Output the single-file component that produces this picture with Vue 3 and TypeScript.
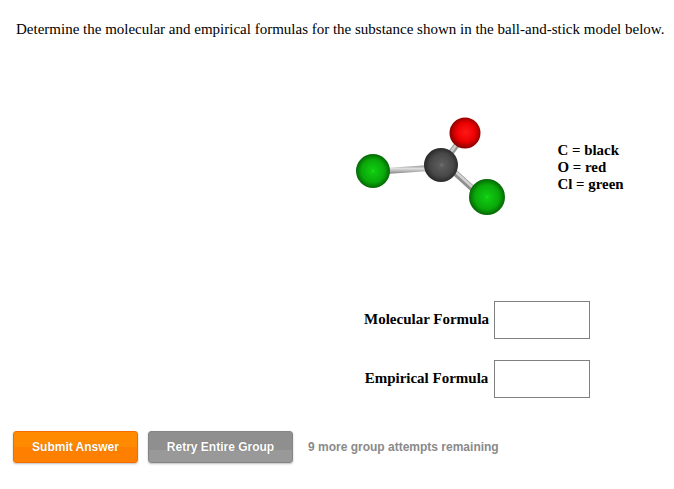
<script setup lang="ts">
const legend: string[] = ['C = black', 'O = red', 'Cl = green']
const fields: string[] = ['Molecular Formula', 'Empirical Formula']
</script>

<template>
  <main class="page">
    <p class="question">Determine the molecular and empirical formulas for the substance shown in the ball-and-stick model below.</p>
    <section class="figure">
      <svg class="model" width="170" height="110" viewBox="0 0 170 110" role="img" aria-label="Ball-and-stick model">
        <defs>
          <radialGradient id="g" cx="50%" cy="50%" r="52%">
            <stop offset="0" stop-color="#1ae01a" />
            <stop offset=".12" stop-color="#10c810" />
            <stop offset=".65" stop-color="#0aa80a" />
            <stop offset="1" stop-color="#045e04" />
          </radialGradient>
          <radialGradient id="r" cx="52%" cy="48%" r="52%">
            <stop offset="0" stop-color="#ff1818" />
            <stop offset=".6" stop-color="#ea0000" />
            <stop offset="1" stop-color="#860000" />
          </radialGradient>
          <radialGradient id="c" cx="52%" cy="50%" r="52%">
            <stop offset="0" stop-color="#787878" />
            <stop offset=".12" stop-color="#5c5c5c" />
            <stop offset=".65" stop-color="#484848" />
            <stop offset="1" stop-color="#262626" />
          </radialGradient>
          <linearGradient id="b1" x1="0" y1="0" x2="0" y2="1">
            <stop offset="0" stop-color="#8c8c8c" />
            <stop offset=".4" stop-color="#e0e0e0" />
            <stop offset="1" stop-color="#808080" />
          </linearGradient>
        </defs>
        <path d="M46 60 L90 57 L90 63 L46 66 Z" fill="url(#b1)" />
        <path d="M110 46 L122 30" stroke="#9a9a9a" stroke-width="6" fill="none" />
        <path d="M110 45 L122 29" stroke="#cfcfcf" stroke-width="2.5" fill="none" />
        <path d="M112 62 L134 82" stroke="#8f8f8f" stroke-width="6" fill="none" />
        <path d="M112.5 61 L134.5 81" stroke="#d2d2d2" stroke-width="2.5" fill="none" />
        <circle cx="125" cy="25" r="15.5" fill="url(#r)" />
        <circle cx="101" cy="57" r="17" fill="url(#c)" />
        <circle cx="33" cy="63" r="17" fill="url(#g)" />
        <circle cx="147" cy="89" r="18" fill="url(#g)" />
      </svg>
      <ul class="legend">
        <li v-for="item in legend" :key="item">{{ item }}</li>
      </ul>
    </section>
    <section class="fields">
      <label v-for="f in fields" :key="f" class="field">
        <span class="name">{{ f }}</span>
        <input class="box" type="text" />
      </label>
    </section>
    <footer class="actions">
      <button class="btn submit" type="button">Submit Answer</button>
      <button class="btn retry" type="button">Retry Entire Group</button>
      <span class="remaining">9 more group attempts remaining</span>
    </footer>
  </main>
</template>

<style>
html, body { background: #fff; }
</style>

<style scoped>
.page {
  width: 674px;
  height: 489px;
  box-sizing: border-box;
  overflow: hidden;
  font-family: "Liberation Serif", "Times New Roman", serif;
  color: #000;
}
.question {
  margin: 0;
  padding: 21px 0 0 16px;
  font-size: 15px;
  line-height: 17px;
  white-space: nowrap;
}
.figure {
  display: flex;
  align-items: flex-start;
  margin-top: 70px;
  padding-left: 340px;
}
.model { display: block; flex: none; }
.legend {
  list-style: none;
  margin: 34px 0 0 47.5px;
  padding: 0;
  font-size: 14.9px;
  font-weight: 700;
  line-height: 17px;
  white-space: nowrap;
}
.fields {
  display: flex;
  flex-direction: column;
  align-items: flex-end;
  gap: 21px;
  width: 590px;
  margin-top: 83px;
}
.field { display: flex; align-items: center; gap: 5px; }
.name {
  width: 125px;
  padding-bottom: 2px;
  font-size: 15px;
  font-weight: 700;
  text-align: center;
  white-space: nowrap;
}
.box {
  width: 96px;
  height: 38px;
  box-sizing: border-box;
  border: 1px solid #808080;
  background: #fff;
  padding: 0;
  margin: 0;
  display: block;
}
.actions {
  display: flex;
  align-items: center;
  margin-top: 33px;
  padding-left: 13px;
  font-family: "Liberation Sans", Arial, sans-serif;
  font-size: 12px;
  font-weight: 700;
}
.btn {
  height: 32px;
  box-sizing: border-box;
  border-radius: 3px;
  color: #fff;
  font: inherit;
  padding: 0;
  text-shadow: 0 0 1px rgba(0,0,0,.25);
  box-shadow: 0 1px 2px rgba(0,0,0,.25);
}
.submit {
  width: 125px;
  border: 1px solid #f26c00;
  background: linear-gradient(#ff8a00 0, #ff8a00 50%, #ff8000 50%, #ff8000 100%);
}
.retry {
  width: 145px;
  margin-left: 10px;
  border: 1px solid #858585;
  background: linear-gradient(#8f8f8f 0, #8f8f8f 60%, #999 60%, #999 100%);
}
.remaining { margin-left: 15px; color: #8a8a8a; }
</style>
